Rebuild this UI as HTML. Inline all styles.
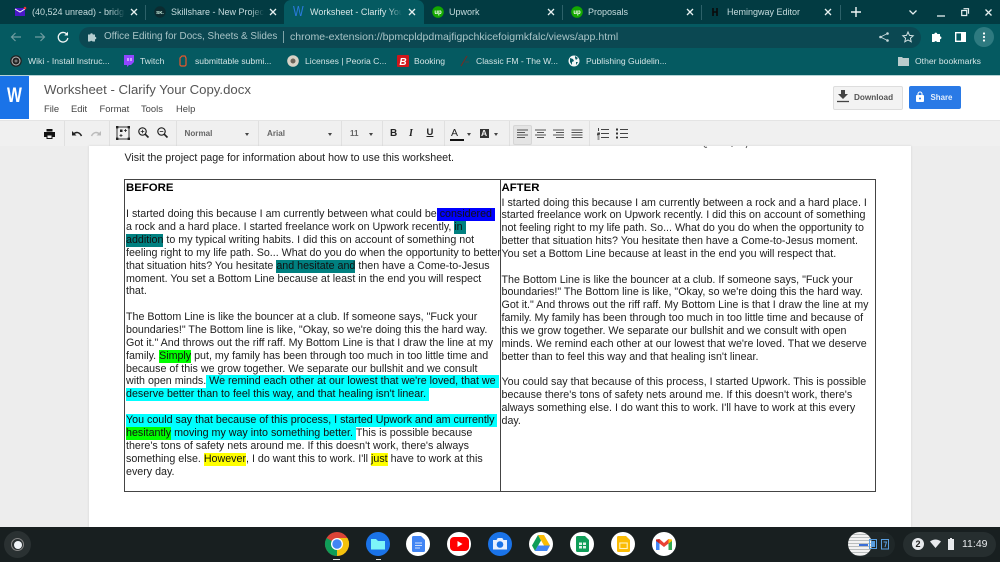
<!DOCTYPE html>
<html><head><meta charset="utf-8">
<style>
html,body{margin:0;padding:0;width:1000px;height:562px;overflow:hidden;background:#ededed;font-family:"Liberation Sans",sans-serif}
.a{position:absolute}
.t{position:absolute;white-space:nowrap}
svg{position:absolute;overflow:visible}
.tab{position:absolute;top:5px;height:14px;line-height:14px;font-size:9px;color:#c6dcde;white-space:nowrap;overflow:hidden;-webkit-mask-image:linear-gradient(90deg,#000 85%,transparent)}
.sep{position:absolute;top:5px;width:1px;height:15px;background:#2d6169}
.bm{position:absolute;top:55px;height:12px;line-height:12px;font-size:8.6px;color:#d3e4e5;white-space:nowrap}
.mn{position:absolute;top:102px;font-size:9.4px;line-height:13px;color:#444;white-space:nowrap}
.ts{position:absolute;top:121px;width:1px;height:25px;background:#e0e0e0}
.dd{position:absolute;top:127px;font-size:8.1px;font-weight:bold;line-height:13px;color:#666}
.car{position:absolute;top:133px;width:0;height:0;border-left:2.2px solid transparent;border-right:2.2px solid transparent;border-top:3px solid #444}
.l{position:absolute;white-space:pre;font-size:10.7px;line-height:13px;height:13px;color:#222;margin-top:1px}
.l span{display:inline-block;height:13px;line-height:13px;white-space:pre}
.b{background:#0000ff;color:#111}.g{background:#008080;color:#111}.lm{background:#00ff00;color:#111}.c{background:#00ffff;color:#111}.y{background:#ffff00;color:#111}
.ic{position:absolute;top:532px;width:24px;height:24px;border-radius:50%;background:#fff}
</style></head><body>

<!-- Chrome frame -->
<div class="a" style="left:0;top:0;width:1000px;height:24px;background:#023b42"></div>
<div class="a" style="left:0;top:24px;width:1000px;height:51px;background:#055a61"></div>
<div class="a" style="left:284px;top:0;width:140px;height:24px;background:#055a61;border-radius:7px 7px 0 0"></div>

<!-- Tabs -->
<svg style="left:15px;top:7px" width="11" height="9"><rect width="10" height="8" y="1" fill="#4a18c8"/><path d="M0 2l5 3 5-3" stroke="#fff" stroke-width="1" fill="none"/><circle cx="10" cy="1" r="1.3" fill="#e33"/></svg>
<div class="tab" style="left:32px;width:93px">(40,524 unread) - bridget</div>
<svg style="left:130px;top:8px" width="8" height="8"><path d="M1 1l6 6M7 1l-6 6" stroke="#e6f0f0" stroke-width="1.3"/></svg>
<div class="sep" style="left:145px"></div>
<svg style="left:154px;top:6px" width="12" height="12"><circle cx="6" cy="6" r="5.7" fill="#0b2b30"/><text x="6" y="7.8" font-size="4.6" font-weight="bold" fill="#dfe" text-anchor="middle" font-family="Liberation Sans">SK.</text></svg>
<div class="tab" style="left:171px;width:93px">Skillshare - New Project</div>
<svg style="left:269px;top:8px" width="8" height="8"><path d="M1 1l6 6M7 1l-6 6" stroke="#e6f0f0" stroke-width="1.3"/></svg>
<div class="t" style="left:293px;top:3px;font-size:15px;line-height:17px;color:#2a7be0;transform:scaleX(.75);transform-origin:left">W</div>
<div class="tab" style="left:310px;width:92px;color:#d6e6e7">Worksheet - Clarify Your</div>
<svg style="left:408px;top:8px" width="8" height="8"><path d="M1 1l6 6M7 1l-6 6" stroke="#e6f0f0" stroke-width="1.3"/></svg>
<svg style="left:432px;top:6px" width="12" height="12"><circle cx="6" cy="6" r="5.8" fill="#14a800"/><text x="6" y="8" font-size="6" font-weight="bold" fill="#fff" text-anchor="middle" font-family="Liberation Sans">up</text></svg>
<div class="tab" style="left:449px;width:90px">Upwork</div>
<svg style="left:547px;top:8px" width="8" height="8"><path d="M1 1l6 6M7 1l-6 6" stroke="#e6f0f0" stroke-width="1.3"/></svg>
<div class="sep" style="left:562px"></div>
<svg style="left:571px;top:6px" width="12" height="12"><circle cx="6" cy="6" r="5.8" fill="#14a800"/><text x="6" y="8" font-size="6" font-weight="bold" fill="#fff" text-anchor="middle" font-family="Liberation Sans">up</text></svg>
<div class="tab" style="left:588px;width:90px">Proposals</div>
<svg style="left:686px;top:8px" width="8" height="8"><path d="M1 1l6 6M7 1l-6 6" stroke="#e6f0f0" stroke-width="1.3"/></svg>
<div class="sep" style="left:701px"></div>
<svg style="left:712px;top:8px" width="7" height="8"><path d="M1 0v8M5 0v8M1 4h4" stroke="#0a0a0a" stroke-width="1.6"/></svg>
<div class="tab" style="left:727px;width:95px">Hemingway Editor</div>
<svg style="left:824px;top:8px" width="8" height="8"><path d="M1 1l6 6M7 1l-6 6" stroke="#e6f0f0" stroke-width="1.3"/></svg>
<div class="sep" style="left:840px"></div>
<svg style="left:851px;top:7px" width="10" height="10"><path d="M5 0v10M0 5h10" stroke="#f0f5f5" stroke-width="1.4"/></svg>
<svg style="left:909px;top:10px" width="8" height="5"><path d="M.5 .5l3.5 3.5 3.5-3.5" stroke="#e6f0f0" stroke-width="1.3" fill="none"/></svg>
<svg style="left:937px;top:15px" width="8" height="2"><path d="M0 1h8" stroke="#e6f0f0" stroke-width="1.3"/></svg>
<svg style="left:961px;top:8px" width="8" height="8"><path d="M2.5 .7h5v5M.7 2.5h5v5h-5z" stroke="#e6f0f0" stroke-width="1.2" fill="none"/></svg>
<svg style="left:985px;top:9px" width="7" height="7"><path d="M.5 .5l6 6M6.500 .5l-6 6" stroke="#e6f0f0" stroke-width="1.3"/></svg>

<!-- Omnibox row -->
<div class="a" style="left:79px;top:27px;width:842px;height:21px;border-radius:11px;background:#0b4852"></div>
<svg style="left:10px;top:31px" width="12" height="12"><path d="M11 6H1.500M5.500 2L1.500 6l4 4" stroke="#6f9ca0" stroke-width="1.2" fill="none"/></svg>
<svg style="left:34px;top:31px" width="12" height="12"><path d="M1 6h9.500M6.500 2l4 4-4 4" stroke="#6f9ca0" stroke-width="1.2" fill="none"/></svg>
<svg style="left:57px;top:31px" width="12" height="12"><path d="M10 3.500A4.800 4.800 0 1 0 10.800 7" stroke="#f0f5f5" stroke-width="1.300" fill="none"/><path d="M11 .8v3.700H7.300z" fill="#f0f5f5"/></svg>
<svg style="left:87px;top:32px" width="10" height="10"><path d="M1 3h2.200a1.300 1.300 0 0 1 2.600 0H8v2.200a1.300 1.300 0 0 1 0 2.600V10H5.500a1.300 1.300 0 0 0-2.400 0H1z" fill="#b5cdd0" transform="translate(0 -.5)"/></svg>
<div class="t" style="left:104px;top:30px;font-size:9.9px;line-height:14px;color:#a9c4c7">Office Editing for Docs, Sheets &amp; Slides</div>
<div class="a" style="left:283px;top:31px;width:1px;height:12px;background:#7fa3a7"></div>
<div class="t" style="left:290px;top:30px;font-size:10.55px;line-height:14px;color:#a9c4c7">chrome-extension://bpmcpldpdmajfigpchkicefoigmkfalc/views/app.html</div>
<svg style="left:879px;top:32px" width="10" height="10"><circle cx="8.500" cy="1.500" r="1.300" fill="#c7d9db"/><circle cx="8.500" cy="8.500" r="1.300" fill="#c7d9db"/><circle cx="1.500" cy="5" r="1.300" fill="#c7d9db"/><path d="M8.500 1.500L1.500 5l7 3.500" stroke="#c7d9db" stroke-width=".9" fill="none"/></svg>
<svg style="left:902px;top:31px" width="12" height="12"><path d="M6 1l1.500 3.400 3.700.4-2.800 2.400.8 3.600L6 9l-3.200 1.800.8-3.600L.8 4.800l3.700-.4z" stroke="#d3e2e3" stroke-width="1" fill="none"/></svg>
<svg style="left:931px;top:32px" width="11" height="11"><path d="M1 3h2.400a1.400 1.400 0 0 1 2.800 0H9v2.400a1.400 1.400 0 0 1 0 2.800V11H6a1.400 1.400 0 0 0-2.600 0H1z" fill="#fff" transform="translate(0 -1)"/></svg>
<svg style="left:955px;top:32px" width="11" height="10"><rect x=".7" y=".7" width="9.600" height="8.600" fill="none" stroke="#fff" stroke-width="1.400"/><rect x="6" y="1" width="4" height="8" fill="#fff"/></svg>
<div class="a" style="left:974px;top:27px;width:20px;height:20px;border-radius:50%;background:#2e7a80"></div>
<svg style="left:982px;top:32px" width="4" height="11"><circle cx="2" cy="1.500" r="1.100" fill="#fff"/><circle cx="2" cy="5" r="1.100" fill="#fff"/><circle cx="2" cy="8.500" r="1.100" fill="#fff"/></svg>

<!-- Bookmarks -->
<svg style="left:10px;top:55px" width="12" height="12"><circle cx="6" cy="6" r="5.800" fill="#222"/><circle cx="6" cy="6" r="4" fill="none" stroke="#bbb" stroke-width="1"/><circle cx="6" cy="6" r="1.500" fill="#777"/></svg>
<div class="bm" style="left:28px">Wiki - Install Instruc...</div>
<svg style="left:123px;top:55px" width="11" height="12"><path d="M1 0h10v7l-3 3H6l-2 2v-2H1z" fill="#9146ff"/><path d="M5 3v3M8 3v3" stroke="#fff" stroke-width="1"/></svg>
<div class="bm" style="left:140px">Twitch</div>
<svg style="left:179px;top:55px" width="8" height="12"><path d="M1 3l2-2h3l1 2v7l-1 1H2l-1-1z" fill="none" stroke="#e8572d" stroke-width="1.200"/></svg>
<div class="bm" style="left:195px">submittable submi...</div>
<svg style="left:287px;top:55px" width="12" height="12"><circle cx="6" cy="6" r="5.800" fill="#d8d2c6"/><circle cx="6" cy="6" r="2.500" fill="#6c6459"/></svg>
<div class="bm" style="left:305px">Licenses | Peoria C...</div>
<svg style="left:397px;top:55px" width="12" height="12"><rect width="12" height="12" rx="1" fill="#d0161b"/><text x="6" y="10" font-size="10" font-weight="bold" font-style="italic" fill="#fff" text-anchor="middle" font-family="Liberation Sans">B</text></svg>
<div class="bm" style="left:414px">Booking</div>
<svg style="left:459px;top:55px" width="11" height="12"><path d="M2 11L8 1" stroke="#7a2a20" stroke-width="1"/><path d="M6 7h4" stroke="#444" stroke-width="1"/></svg>
<div class="bm" style="left:476px">Classic FM - The W...</div>
<svg style="left:568px;top:55px" width="12" height="12"><circle cx="6" cy="6" r="5.500" fill="#f2f6f6"/><path d="M2 3l3 1 1 2-2 1 0 3-2-3zM7 1l3 2-2 2-1-2zM8 7l2 0-2 3z" fill="#055a61"/></svg>
<div class="bm" style="left:586px">Publishing Guidelin...</div>
<svg style="left:898px;top:56px" width="11" height="10"><path d="M0 1h4l1 1h6v8H0z" fill="#b9cccd"/></svg>
<div class="bm" style="left:915px">Other bookmarks</div>

<!-- App header -->
<div class="a" style="left:0;top:75px;width:1000px;height:45px;background:#fff"></div>
<div class="a" style="left:0;top:75px;width:1000px;height:1px;background:#b5d3d5"></div>
<div class="a" style="left:0;top:76px;width:29px;height:43px;background:#1a73e8"></div>
<div class="t" style="left:0;top:86px;width:29px;text-align:center;font-size:21px;font-weight:bold;line-height:20px;color:#fff;transform:scaleX(.75)">W</div>
<div class="t" style="left:44px;top:82px;font-size:13.2px;line-height:16px;color:#555">Worksheet - Clarify Your Copy.docx</div>
<div class="mn" style="left:44px">File</div><div class="mn" style="left:71px">Edit</div><div class="mn" style="left:99.500px">Format</div><div class="mn" style="left:141px">Tools</div><div class="mn" style="left:176px">Help</div>
<div class="a" style="left:833px;top:86px;width:68px;height:22px;background:#f3f3f3;border:1px solid #ddd;border-radius:2px"></div>
<svg style="left:837px;top:90px" width="12" height="13"><path d="M4 0h4v4h3L6 9 1 4h3z" fill="#444"/><path d="M0 11.500h12" stroke="#444" stroke-width="1.300"/></svg>
<div class="t" style="left:854px;top:91px;font-size:8.200px;font-weight:bold;line-height:13px;color:#555">Download</div>
<div class="a" style="left:909px;top:86px;width:52px;height:23px;background:#2a7ae6;border-radius:2px"></div>
<svg style="left:916px;top:91px" width="8" height="11"><rect y="4" width="8" height="7" rx="1" fill="#fff"/><path d="M2 4.500V3a2 2 0 0 1 4 0v1.500" stroke="#fff" fill="none" stroke-width="1.100"/><circle cx="4" cy="7.500" r="1" fill="#2a7ae6"/></svg>
<div class="t" style="left:930.500px;top:91px;font-size:7.900px;font-weight:bold;line-height:13px;color:#e3eefc">Share</div>

<!-- Doc toolbar -->
<div class="a" style="left:0;top:120px;width:1000px;height:26px;background:#f0f0f0;border-top:1px solid #e4e4e4;box-sizing:border-box"></div>
<div class="ts" style="left:64px"></div><div class="ts" style="left:109px"></div><div class="ts" style="left:176px"></div><div class="ts" style="left:258px"></div><div class="ts" style="left:341px"></div><div class="ts" style="left:382px"></div><div class="ts" style="left:444px"></div><div class="ts" style="left:509px"></div><div class="ts" style="left:589px"></div>
<svg style="left:44px;top:129px" width="11" height="10"><path d="M2.500 0h6v2.500h-6zM0 3h11v5H8.500v2h-6V8H0z" fill="#111"/><rect x="3.500" y="6.500" width="4" height="2.500" fill="#f0f0f0"/></svg>
<svg style="left:71px;top:130px" width="11" height="7"><path d="M1 1v4.500h4.500z" fill="#222"/><path d="M2.500 4C5 1.500 8.500 2 10.500 6" stroke="#222" stroke-width="1.500" fill="none"/></svg>
<svg style="left:91px;top:130px" width="11" height="7"><path d="M10 1v4.500H5.500z" fill="#bbb"/><path d="M8.500 4C6 1.500 2.500 2 .5 6" stroke="#bbb" stroke-width="1.500" fill="none"/></svg>
<svg style="left:116px;top:126px" width="14" height="14"><rect x="1" y="1" width="12" height="12" fill="none" stroke="#333" stroke-width="1"/><rect width="2.400" height="2.400" fill="#222"/><rect x="11.600" width="2.400" height="2.400" fill="#222"/><rect y="11.600" width="2.400" height="2.400" fill="#222"/><rect x="11.600" y="11.600" width="2.400" height="2.400" fill="#222"/><rect x="4" y="3.500" width="2.500" height="2.500" fill="#222"/><path d="M9.500 3v3M8 4.500h3M5 8v3M3.500 9.500h3" stroke="#222" stroke-width=".8"/></svg>
<svg style="left:138px;top:127px" width="11" height="11"><circle cx="4.500" cy="4.500" r="3.700" fill="none" stroke="#222" stroke-width="1.200"/><path d="M7.300 7.300l3.200 3.200" stroke="#222" stroke-width="1.600"/><path d="M4.500 2.700v3.600M2.700 4.500h3.600" stroke="#222" stroke-width=".8"/></svg>
<svg style="left:157px;top:127px" width="11" height="11"><circle cx="4.500" cy="4.500" r="3.700" fill="none" stroke="#222" stroke-width="1.200"/><path d="M7.300 7.300l3.200 3.200" stroke="#222" stroke-width="1.600"/><path d="M2.700 4.500h3.600" stroke="#222" stroke-width=".8"/></svg>
<div class="dd" style="left:184.500px">Normal</div><div class="car" style="left:245px"></div>
<div class="dd" style="left:267px">Arial</div><div class="car" style="left:328px"></div>
<div class="dd" style="left:350px">11</div><div class="car" style="left:369px"></div>
<div class="t" style="left:390px;top:127px;font-size:10px;font-weight:bold;line-height:13px;color:#222">B</div>
<div class="t" style="left:409px;top:127px;font-size:10px;font-weight:bold;font-style:italic;line-height:13px;color:#222;font-family:'Liberation Serif'">I</div>
<div class="t" style="left:426.500px;top:127px;font-size:9.500px;font-weight:bold;line-height:12px;color:#222;text-decoration:underline">U</div>
<div class="t" style="left:451px;top:127px;font-size:10.5px;line-height:12px;color:#222">A</div>
<div class="a" style="left:450px;top:138.500px;width:14px;height:2.500px;background:#111"></div><div class="car" style="left:467px"></div>
<div class="a" style="left:480px;top:129px;width:9px;height:9px;background:#333"></div>
<div class="t" style="left:481px;top:128px;font-size:8.500px;font-weight:bold;line-height:11px;color:#f0f0f0">A</div><div class="car" style="left:494px"></div>
<div class="a" style="left:513px;top:125px;width:17px;height:18px;background:#e4e4e4;border:1px solid #d6d6d6;border-radius:2px"></div>
<svg style="left:516px;top:129px" width="72" height="10"><g stroke="#555" stroke-width="1.100"><path d="M1 1h11M1 3.500h8M1 6h11M1 8.500h8"/><path d="M19 1h11M21 3.500h7M19 6h11M21 8.500h7"/><path d="M37 1h11M40 3.500h8M37 6h11M40 8.500h8"/><path d="M55.500 1h11M55.500 3.500h11M55.500 6h11M55.500 8.500h11"/></g></svg>
<svg style="left:597px;top:128px" width="30" height="11"><g stroke="#444" stroke-width="1"><path d="M5 1.500h8M5 5.500h8M5 9.500h8M24 1.500h8M24 5.500h8M24 9.500h8" transform="translate(-1 0)"/><path d="M1.500 0v3M.5 5h2v1h-2v1h2M.5 9h2M.5 11h2"/></g><g fill="#333"><rect x="19" y=".5" width="2" height="2"/><rect x="19" y="4.500" width="2" height="2"/><rect x="19" y="8.500" width="2" height="2"/></g></svg>

<!-- Document page -->
<div class="a" style="left:0;top:146px;width:1000px;height:381px;background:#ededed"></div>
<div class="a" style="left:89px;top:146px;width:822px;height:381px;background:#fff;box-shadow:0 0 2px #d0d0d0"></div>
<div class="l" style="left:124.500px;top:151px">Visit the project page for information about how to use this worksheet.</div>
<svg style="left:700px;top:146px" width="50" height="3"><path d="M4 0q1 2 3 1M32 0v1M47 0l-1 2" stroke="#333" stroke-width=".8" fill="none"/></svg>

<!-- Table -->
<div class="a" style="left:124px;top:179px;width:750px;height:311px;border:1px solid #444"></div>
<div class="a" style="left:500px;top:180px;width:1px;height:311px;background:#444"></div>

<div class="l" style="left:126px;top:180.500px;font-weight:bold;color:#000;font-size:11.4px">BEFORE</div>
<div class="l" style="left:126px;top:207px">I started doing this because I am currently between what could be<span class="b"> considered </span></div>
<div class="l" style="left:126px;top:220px">a rock and a hard place. I started freelance work on Upwork recently, <span class="g">in </span></div>
<div class="l" style="left:126px;top:233px"><span class="g">addition</span> to my typical writing habits. I did this on account of something not</div>
<div class="l" style="left:126px;top:245.500px">feeling right to my life path. So... What do you do when the opportunity to better</div>
<div class="l" style="left:126px;top:258.500px">that situation hits? You hesitate <span class="g">and hesitate and</span> then have a Come-to-Jesus</div>
<div class="l" style="left:126px;top:271.500px">moment. You set a Bottom Line because at least in the end you will respect</div>
<div class="l" style="left:126px;top:284px">that.</div>
<div class="l" style="left:126px;top:309.500px">The Bottom Line is like the bouncer at a club. If someone says, "Fuck your</div>
<div class="l" style="left:126px;top:322.500px">boundaries!" The Bottom line is like, "Okay, so we're doing this the hard way.</div>
<div class="l" style="left:126px;top:335.500px">Got it." And throws out the riff raff. My Bottom Line is that I draw the line at my</div>
<div class="l" style="left:126px;top:348.500px">family. <span class="lm">Simply</span> put, my family has been through too much in too little time and</div>
<div class="l" style="left:126px;top:361.500px">because of this we grow together. We separate our bullshit and we consult</div>
<div class="l" style="left:126px;top:374px">with open minds.<span class="c"> We remind each other at our lowest that we're loved, that we </span></div>
<div class="l" style="left:126px;top:387px"><span class="c">deserve better than to feel this way, and that healing isn't linear. </span></div>
<div class="l" style="left:126px;top:412.500px"><span class="c">You could say that because of this process, I started Upwork and am currently </span></div>
<div class="l" style="left:126px;top:425.500px"><span class="lm">hesitantly</span><span class="c"> moving my way into something better. </span>This is possible because</div>
<div class="l" style="left:126px;top:438.500px">there's tons of safety nets around me. If this doesn't work, there's always</div>
<div class="l" style="left:126px;top:451.500px">something else. <span class="y">However</span>, I do want this to work. I'll <span class="y">just</span> have to work at this</div>
<div class="l" style="left:126px;top:464.500px">every day.</div>

<div class="l" style="left:501.500px;top:180.500px;font-weight:bold;color:#000;font-size:11.4px">AFTER</div>
<div class="l" style="left:501.500px;top:195.500px">I started doing this because I am currently between a rock and a hard place. I</div>
<div class="l" style="left:501.500px;top:208px">started freelance work on Upwork recently. I did this on account of something</div>
<div class="l" style="left:501.500px;top:221px">not feeling right to my life path. So... What do you do when the opportunity to</div>
<div class="l" style="left:501.500px;top:233.500px">better that situation hits? You hesitate then have a Come-to-Jesus moment.</div>
<div class="l" style="left:501.500px;top:246.500px">You set a Bottom Line because at least in the end you will respect that.</div>
<div class="l" style="left:501.500px;top:272.500px">The Bottom Line is like the bouncer at a club. If someone says, "Fuck your</div>
<div class="l" style="left:501.500px;top:285px">boundaries!" The Bottom line is like, "Okay, so we're doing this the hard way.</div>
<div class="l" style="left:501.500px;top:298px">Got it." And throws out the riff raff. My Bottom Line is that I draw the line at my</div>
<div class="l" style="left:501.500px;top:311px">family. My family has been through too much in too little time and because of</div>
<div class="l" style="left:501.500px;top:324px">this we grow together. We separate our bullshit and we consult with open</div>
<div class="l" style="left:501.500px;top:336.500px">minds. We remind each other at our lowest that we're loved. That we deserve</div>
<div class="l" style="left:501.500px;top:349.500px">better than to feel this way and that healing isn't linear.</div>
<div class="l" style="left:501.500px;top:375px">You could say that because of this process, I started Upwork. This is possible</div>
<div class="l" style="left:501.500px;top:388px">because there's tons of safety nets around me. If this doesn't work, there's</div>
<div class="l" style="left:501.500px;top:401px">always something else. I do want this to work. I'll have to work at this every</div>
<div class="l" style="left:501.500px;top:414px">day.</div>

<!-- Shelf -->
<div class="a" style="left:0;top:527px;width:1000px;height:35px;background:#181f20"></div>
<div class="a" style="left:4px;top:531px;width:27px;height:27px;border-radius:50%;background:#2a3132"></div>
<div class="a" style="left:11px;top:538px;width:13px;height:13px;border-radius:50%;border:1px solid #888;box-sizing:border-box"></div>
<div class="a" style="left:13.500px;top:540.500px;width:8px;height:8px;border-radius:50%;background:#f0f4f8"></div>

<svg style="left:325px;top:532px" width="24" height="24"><circle cx="12" cy="12" r="12" fill="#db4437"/><path d="M12 12L1.600 6A12 12 0 0 0 12 24z" fill="#0f9d58"/><path d="M12 12V24A12 12 0 0 0 22.400 6z" fill="#f4c20d"/><path d="M12 6h10.400A12 12 0 0 1 24 12H12z" fill="#f4c20d"/><circle cx="12" cy="12" r="6" fill="#fff"/><circle cx="12" cy="12" r="4.700" fill="#4285f4"/></svg>
<div class="a" style="left:333px;top:559px;width:7px;height:1px;background:#ddd"></div>
<svg style="left:366px;top:532px" width="24" height="24"><circle cx="12" cy="12" r="12" fill="#1a73e8"/><path d="M5 7h5l2 2h7v8.500H5z" fill="#7df5f8"/></svg>
<div class="a" style="left:376px;top:559px;width:5px;height:1px;background:#ddd"></div>
<div class="ic" style="left:406px"></div>
<svg style="left:412px;top:536px" width="13" height="16"><path d="M0 1.500A1.500 1.500 0 0 1 1.500 0H9l4 4v10.500a1.500 1.500 0 0 1-1.500 1.500h-10A1.500 1.500 0 0 1 0 14.500z" fill="#4285f4"/><path d="M3 7h7M3 9.500h7M3 12h5" stroke="#cfe0fc" stroke-width="1"/></svg>
<div class="ic" style="left:447px"></div>
<svg style="left:449.500px;top:537px" width="19" height="14"><rect width="19" height="14" rx="4" fill="#f00"/><path d="M7.500 4l5 3-5 3z" fill="#fff"/></svg>
<svg style="left:488px;top:532px" width="24" height="24"><circle cx="12" cy="12" r="12" fill="#1a73e8"/><path d="M5 8h3.500l1.200-2h4.600l1.200 2H19v9.500H5z" fill="#e8f0fe"/><circle cx="12" cy="12.500" r="3.300" fill="#1a73e8"/></svg>
<div class="ic" style="left:529px"></div>
<svg style="left:532px;top:535px" width="18" height="16"><path d="M6 0h6l6 10.500h-6z" fill="#fbbc04"/><path d="M6 0l3 5.500L3 16 0 10.500z" fill="#0f9d58"/><path d="M6 10.500h12L15 16H3z" fill="#4285f4"/></svg>
<div class="ic" style="left:570px"></div>
<svg style="left:576px;top:536px" width="13" height="16"><path d="M0 1.500A1.500 1.500 0 0 1 1.500 0H9l4 4v10.500a1.500 1.500 0 0 1-1.500 1.500h-10A1.500 1.500 0 0 1 0 14.500z" fill="#0f9d58"/><rect x="3" y="6.500" width="7" height="6" fill="#dff3e7"/><path d="M6.500 6.500v6M3 9.500h7" stroke="#0f9d58"/></svg>
<div class="ic" style="left:611px"></div>
<svg style="left:617px;top:536px" width="13" height="16"><path d="M0 1.500A1.500 1.500 0 0 1 1.500 0H9l4 4v10.500a1.500 1.500 0 0 1-1.500 1.500h-10A1.500 1.500 0 0 1 0 14.500z" fill="#fbbc04"/><rect x="2.800" y="7" width="7.400" height="5.500" fill="none" stroke="#fff3c4" stroke-width="1.100"/></svg>
<div class="ic" style="left:652px"></div>
<svg style="left:656px;top:538px" width="16" height="12"><path d="M0 1.500V12h3.500V5z" fill="#4285f4"/><path d="M16 1.500V12h-3.500V5z" fill="#34a853"/><path d="M12.500 1L8 5 3.500 1v4.500L8 9l4.500-3.500z" fill="#ea4335"/><path d="M0 1.500L3.500 1v4.500L0 3z" fill="#c5221f"/><path d="M16 1.500L12.500 1v4.500L16 3z" fill="#fbbc04"/></svg>

<!-- Status -->
<div class="a" style="left:848px;top:532px;width:47px;height:25px;border-radius:13px;background:#1f2728"></div>
<div class="a" style="left:848px;top:532px;width:24px;height:24px;border-radius:50%;background:repeating-linear-gradient(180deg,#f2f2f2 0 2px,#b9bdbd 2px 3px)"></div>
<div class="a" style="left:859px;top:544px;width:9px;height:2px;background:#3a6fd8"></div>
<svg style="left:869px;top:539px" width="22" height="11"><rect x=".5" y=".5" width="7" height="9" fill="none" stroke="#5a9fe0"/><rect x="2" y="2" width="4" height="6" fill="#5a9fe0"/><rect x="12.500" y=".5" width="7" height="9.500" fill="none" stroke="#5a9fe0"/><path d="M14.500 3h3l-1.500 5" stroke="#5a9fe0" fill="none"/></svg>
<div class="a" style="left:903px;top:532px;width:93px;height:25px;border-radius:13px;background:#262e2f"></div>
<div class="a" style="left:912px;top:538px;width:12px;height:12px;border-radius:50%;background:#e8eaed;text-align:center;font-size:9px;font-weight:bold;line-height:12px;color:#222">2</div>
<svg style="left:930px;top:539px" width="11" height="9"><path d="M0 2.500Q5.500-1.500 11 2.500L5.500 9z" fill="#e8eaed"/></svg>
<svg style="left:948px;top:538px" width="6" height="12"><path d="M2 0h2v1h2v11H0V1h2z" fill="#e8eaed"/></svg>
<div class="t" style="left:962px;top:537px;font-size:10.5px;line-height:14px;color:#e8eaed">11:49</div>

</body></html>
